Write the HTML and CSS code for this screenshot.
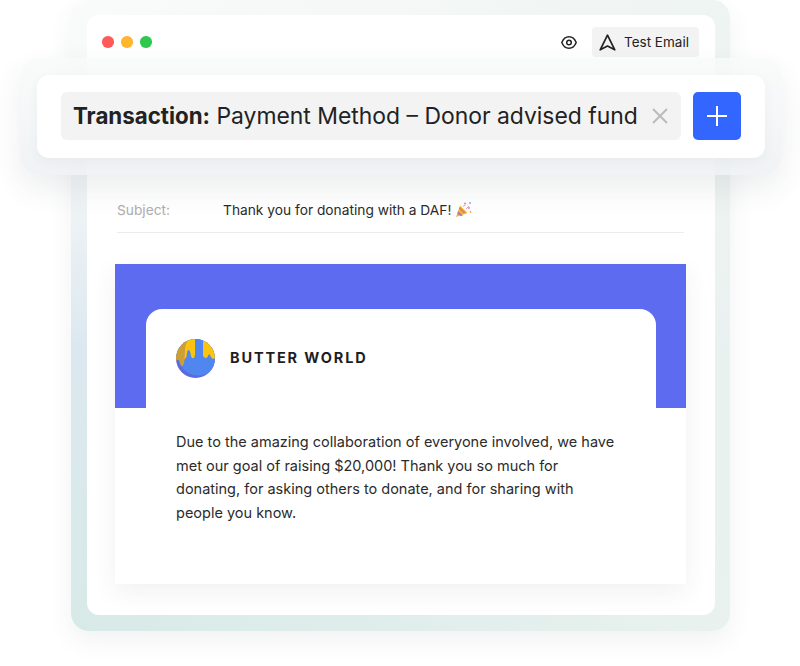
FILE: index.html
```html
<!DOCTYPE html>
<html lang="en">
<head>
<meta charset="utf-8">
<title>Test Email</title>
<link rel="stylesheet" href="styles.css">
</head>
<body>
<div class="stage">
  <div class="frame">
    <div class="window">
      <header class="toolbar">
        <div class="dots"><span class="dot red"></span><span class="dot amber"></span><span class="dot green"></span></div>
        <div class="actions">
          <svg class="eye" width="16" height="13" viewBox="0 0 16 13" fill="none" stroke="#222" stroke-width="1.5"><path d="M.8 6.500C2.200 3 4.800.8 8 .8s5.800 2.200 7.200 5.700c-1.400 3.500-4 5.700-7.200 5.700S2.200 10 .8 6.500z"/><circle cx="8" cy="6.500" r="2.300"/></svg>
          <div class="test-btn">
            <svg width="17" height="17" viewBox="0 0 17 17" fill="none" stroke="#222" stroke-width="1.700" stroke-linejoin="round"><path d="M8.500 1.200 15.800 15.800 8.500 12 1.200 15.800z"/></svg>
            <span>Test Email</span>
          </div>
        </div>
      </header>
      <div class="subject">
        <span class="subject-label">Subject:</span>
        <span class="subject-value">Thank you for donating with a DAF!</span>
        <svg class="popper" width="17" height="17" viewBox="0 0 17 17"><path d="M1 16 5 4.500 12.500 12z" fill="#f2b33d"/><path d="M3 10.500 8 14.500 5.800 15 2.300 12.500z" fill="#b06fc4"/><path d="M4.500 6 10.500 11.500 8.800 12.300 4 7.800z" fill="#d98a3a"/><circle cx="10" cy="2.500" r="1.100" fill="#ef8fb0"/><circle cx="15" cy="2" r="1" fill="#7fb6e8"/><circle cx="14" cy="7" r="1.100" fill="#ef8fb0"/><circle cx="15.500" cy="11" r=".9" fill="#f2b33d"/><path d="M8 5.500 10.500 4" stroke="#9fd08f" stroke-width="1"/><path d="M11 8 14 5" stroke="#e9a3c4" stroke-width="1"/></svg>
      </div>
      <article class="email">
        <div class="band"></div>
        <div class="sheet">
          <div class="brand">
            <svg class="logo" width="39" height="39" viewBox="0 0 39 39">
              <defs><clipPath id="c"><circle cx="19.500" cy="19.500" r="19.500"/></clipPath></defs>
              <g clip-path="url(#c)">
                <rect width="39" height="39" fill="#5b6ae0"/>
                <circle cx="22.500" cy="15.500" r="21" fill="#4f86f0"/>
                <path d="M9 0H19V15C19 20 16 20.500 15 17 14.500 14 14 11 12.500 11 11 11 11 15 10.500 18L8 21z" fill="#fcc30f"/>
                <path d="M27 0H39V19C37 21 35 19 34.500 17 34 15 32.500 15 32 17 31 20 27.500 19.500 27 16z" fill="#fcc30f"/>
                <path d="M0 0H13C10 3 9 8 8.500 14 8.300 18 9 26 6.500 27 4.500 27.500 4 24 3.500 22 2.500 20 1 21 0 22z" fill="#cf9f33"/>
              </g>
            </svg>
            <span class="brand-name">BUTTER WORLD</span>
          </div>
          <p class="message">Due to the amazing collaboration of everyone involved, we have met our goal of raising $20,000! Thank you so much for donating, for asking others to donate, and for sharing with people you know.</p>
        </div>
      </article>
    </div>
  </div>
  <div class="glass">
    <div class="bar">
      <div class="field">
        <span class="field-text"><b>Transaction:</b> Payment Method – Donor advised fund</span>
        <svg class="clear" width="16" height="16" viewBox="0 0 16 16" stroke="#bbb" stroke-width="2"><path d="M1 1l14 14M15 1 1 15"/></svg>
      </div>
      <div class="add">
        <svg width="24" height="24" viewBox="0 0 24 24" stroke="#fff" stroke-width="2"><path d="M12 2v20M2 12h20"/></svg>
      </div>
    </div>
  </div>
</div>
</body>
</html>
```
FILE: styles.css
```css
* { box-sizing: border-box; }
html, body { margin: 0; background: #fff; }
body { font-family: "Inter", "Liberation Sans", sans-serif; color: #222; overflow: hidden; }
.stage { position: relative; width: 800px; height: 666px; overflow: hidden; }

.frame {
  width: 659px; height: 631px; margin-left: 71px; padding: 15px 15px 16px 16px;
  border-radius: 18px;
  background:
    linear-gradient(90deg, rgba(240, 246, 244, 0) 0%, rgba(236, 243, 240, .85) 100%),
    linear-gradient(180deg, #fafbfb 0%, #f4f6f7 26%, #dce8f0 55%, #d7eae7 100%);
  box-shadow: 0 10px 25px rgba(60, 70, 80, .07);
}
.window {
  height: 600px; background: #fff; border-radius: 12px;
  display: flex; flex-direction: column;
}
.toolbar { display: flex; justify-content: space-between; align-items: center; padding: 12px 16px 0 15px; height: 42px; }
.dots { display: flex; gap: 7.500px; }
.dot { width: 11.500px; height: 11.500px; border-radius: 50%; }
.red { background: #ff5a5a; } .amber { background: #ffb52e; } .green { background: #2dc84d; }
.actions { display: flex; align-items: center; gap: 15px; }
.test-btn {
  width: 107px; height: 30px; background: #f3f3f3; border-radius: 4px;
  display: flex; align-items: center; gap: 8px; padding-left: 7px;
  font-size: 13.500px;
}

.subject {
  display: flex; align-items: flex-start; margin: 111px 31px 0 30px; height: 65px; padding-top: 34px;
  border-bottom: 1px solid #ececec; font-size: 13.750px;
}
.subject-label { width: 106px; color: #aeaeae; }
.subject-value { color: #2b2b2b; }
.popper { margin-left: 4px; margin-top: -1px; }

.email {
  position: relative; margin: 31px 29px 0 28px; height: 320px; background: #fff;
  box-shadow: 0 8px 24px rgba(50, 60, 70, .07);
}
.band { height: 144px; background: #5c6bf0; }
.sheet {
  margin: -99px 30px 0 31px; height: 275px; position: relative; background: #fff;
  border-radius: 16px 16px 0 0; padding: 30px;
}
.brand { display: flex; align-items: center; gap: 15px; }
.logo { display: block; }
.brand-name { font-weight: 700; font-size: 14.500px; letter-spacing: 1.850px; color: #1e1e1e; margin-top: -2px; }
.message { margin: 52px 0 0; width: 440px; font-size: 14.500px; line-height: 23.500px; color: #2b2b2b; }

.glass {
  position: absolute; left: 20px; top: 58px; width: 762px; height: 117px; padding: 17px;
  border-radius: 20px;
  background: linear-gradient(180deg, rgba(248, 250, 250, .8) 0%, rgba(238, 241, 243, .88) 100%);
  box-shadow: 0 14px 30px rgba(60, 70, 80, .09);
}
.bar {
  height: 83px; background: #fff; border-radius: 12px; padding: 17px 24px 18px;
  display: flex; gap: 12px;
  box-shadow: 0 4px 12px rgba(60, 70, 80, .05);
}
.field {
  width: 620px; height: 48px; background: #f3f3f3; border-radius: 6px; padding: 0 13px 0 12px;
  display: flex; align-items: center; justify-content: space-between;
  font-size: 22.900px;
}
.field-text { white-space: nowrap; color: #222; }
.field-text b { font-size: 22.300px; }
.add {
  width: 48px; height: 48px; background: #3366ff; border-radius: 5px;
  display: flex; align-items: center; justify-content: center;
}
```
